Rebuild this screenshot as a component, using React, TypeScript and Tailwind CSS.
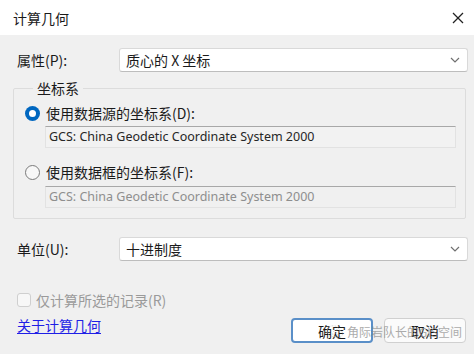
import React from "react";

const cjk = { fontFamily: '"Noto Sans CJK SC", "Noto Sans", sans-serif' };
const latin = { fontFamily: '"Noto Sans", "Open Sans", sans-serif' };

function Chevron() {
  return (
    <svg width="10" height="6" viewBox="0 0 10 6" className="shrink-0">
      <polyline points="1,1 5,5 9,1" fill="none" stroke="#707070" strokeWidth="1.2" />
    </svg>
  );
}

function Select({ value }: { value: string }) {
  return (
    <div className="w-[349px] h-[24px] bg-white border border-[#d9d9d9] border-b-[#bdbdbd] rounded-[3px] flex items-center justify-between pl-[6px] pr-[7px]">
      <span className="text-[14px] leading-none text-[#1a1a1a]">{value}</span>
      <Chevron />
    </div>
  );
}

function Textbox({ text, disabled }: { text: string; disabled?: boolean }) {
  return (
    <div
      className={
        "w-[411px] h-[22px] border border-[#e2e2e2] border-t-[#a8a8a8] flex items-center pl-[3px] " +
        (disabled ? "bg-[#f0f0f0]" : "bg-[#f2f2f2]")
      }
    >
      <span
        style={latin}
        className={"text-[12.5px] leading-none " + (disabled ? "text-[#8e8e8e]" : "text-[#262626]")}
      >
        {text}
      </span>
    </div>
  );
}

export default function App() {
  return (
    <div style={cjk} className="relative w-[474px] h-[354px] bg-[#f0f0f0] overflow-hidden text-[#1a1a1a]">
      {/* Title bar */}
      <div className="h-[35px] bg-white flex items-center justify-between pl-[13px] pr-[10px]">
        <span className="text-[14px] leading-none text-[#1a1a1a]">计算几何</span>
        <svg width="12" height="12" viewBox="0 0 12 12">
          <line x1="1" y1="1" x2="11" y2="11" stroke="#222" strokeWidth="1.2" />
          <line x1="11" y1="1" x2="1" y2="11" stroke="#222" strokeWidth="1.2" />
        </svg>
      </div>

      {/* Property row */}
      <div className="mt-[13px] flex items-center pl-[17px]">
        <span className="w-[102px] text-[14px] leading-none">属性(P):</span>
        <Select value="质心的 X 坐标" />
      </div>

      {/* Group box */}
      <fieldset className="mt-[6px] ml-[13px] w-[453px] h-[141px] border border-[#dcdcdc] rounded-[2px] pl-[11px] pr-[9px] pt-[5px]">
        <legend className="ml-[8px] px-[4px] text-[14px] leading-[20px]">坐标系</legend>
        <div className="flex items-center h-[20px]">
          <span className="w-[15px] h-[15px] rounded-full bg-[#0067c0] flex items-center justify-center">
            <span className="w-[7px] h-[7px] rounded-full bg-white" />
          </span>
          <span className="ml-[6px] text-[14px] leading-none">使用数据源的坐标系(D):</span>
        </div>
        <div className="mt-[3px] ml-[20px]">
          <Textbox text="GCS: China Geodetic Coordinate System 2000" />
        </div>
        <div className="mt-[14px] flex items-center h-[20px]">
          <span className="w-[15px] h-[15px] rounded-full border border-[#7a7a7a] bg-[#f7f7f7]" />
          <span className="ml-[6px] text-[14px] leading-none">使用数据框的坐标系(F):</span>
        </div>
        <div className="mt-[4px] ml-[20px]">
          <Textbox text="GCS: China Geodetic Coordinate System 2000" disabled />
        </div>
      </fieldset>

      {/* Unit row */}
      <div className="mt-[18px] flex items-center pl-[17px]">
        <span className="w-[102px] text-[14px] leading-none">单位(U):</span>
        <Select value="十进制度" />
      </div>

      {/* Checkbox */}
      <div className="mt-[31px] flex items-center pl-[17px] h-[16px]">
        <span className="w-[14px] h-[14px] rounded-[3px] border border-[#cfcfcf] bg-[#f7f7f7]" />
        <span className="ml-[5px] text-[14px] leading-none text-[#9a9a9a]">仅计算所选的记录(R)</span>
      </div>

      {/* Link + buttons */}
      <div className="mt-[8px] flex items-start pl-[17px]">
        <span className="text-[14px] leading-[18px] text-[#1f1fe6] underline underline-offset-2">关于计算几何</span>
        <div className="ml-auto mr-[8px] mt-[2px] flex gap-[11px]">
          <button className="w-[82px] h-[25px] rounded-[4px] border-2 border-[#5a8fc8] bg-white text-[14px] leading-none text-[#1a1a1a]">
            确定
          </button>
          <button className="w-[82px] h-[25px] rounded-[4px] border border-[#d0d0d0] bg-[#fbfbfb] text-[14px] leading-none text-[#1a1a1a]">
            取消
          </button>
        </div>
      </div>

      {/* Watermark overlay */}
      <div className="absolute left-[326px] top-[324px] flex items-center gap-[3px] opacity-70 pointer-events-none whitespace-nowrap">
        <svg width="18" height="16" viewBox="0 0 20 18">
          <ellipse cx="8" cy="8" rx="7" ry="6" fill="none" stroke="#bbb" strokeWidth="1" strokeDasharray="2 1.5" />
          <ellipse cx="13" cy="11" rx="5.5" ry="4.5" fill="none" stroke="#bbb" strokeWidth="1" strokeDasharray="2 1.5" />
        </svg>
        <span className="text-[12px] leading-none text-[#8a8a8a]">角际岩队长的GIS空间</span>
      </div>
    </div>
  );
}
